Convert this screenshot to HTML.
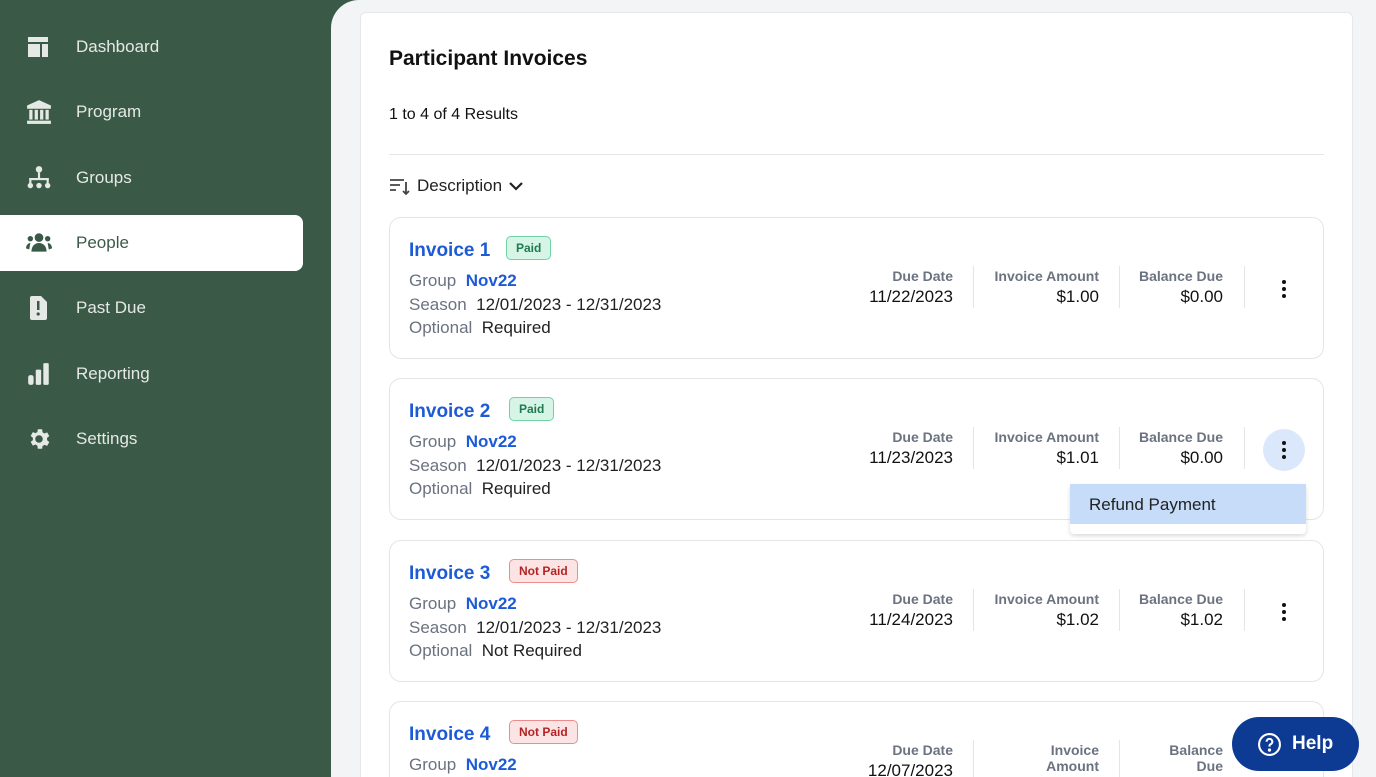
<!DOCTYPE html><html style="overflow:hidden;width:1376px;height:777px"><head><style>
*{box-sizing:border-box;margin:0;padding:0}
body{width:1376px;height:777px;overflow:hidden;background:#3b5947;font-family:"Liberation Sans",sans-serif;position:relative}
.side a{position:absolute;left:0;width:303px;height:56px;display:flex;align-items:center;color:#e4e9e5;font-size:17px;text-decoration:none}
.side a svg{position:absolute;left:26px}
.side a span{position:absolute;left:76px}
.side a.act{background:#fff;border-radius:0 8px 8px 0;color:#3b5947}
.main{position:absolute;left:331px;top:0;width:1045px;height:777px;background:#f3f4f6;border-top-left-radius:28px;overflow:hidden}
.panel{position:absolute;left:29px;top:12px;width:993px;height:765px;background:#fff;border:1px solid #e5e7eb;border-bottom:none;border-radius:6px 6px 0 0;overflow:hidden}
h1{position:absolute;left:28px;top:34px;font-size:21px;color:#111;font-weight:bold}
.res{position:absolute;left:28px;top:93px;font-size:16px;color:#111}
.hr{position:absolute;left:28px;top:141px;width:935px;height:1px;background:#e5e7eb}
.sort{position:absolute;left:28px;top:163px;font-size:17px;color:#222;display:flex;align-items:center;gap:6px}
.card{position:absolute;left:28px;width:935px;height:142px;border:1px solid #e3e5e8;border-radius:12px;background:#fff}
.t{position:absolute;left:19px;top:22px;font-size:19px;font-weight:bold;color:#1d5bd6}
.badge{position:absolute;top:18px;font-size:12px;font-weight:bold;padding:4px 9px;border-radius:5px}
.paid{background:#d6f5e6;border:1px solid #6fd3a5;color:#1e7a4f}
.np{background:#fde4e4;border:1px solid #ec8c8c;color:#b42323}
.l{position:absolute;left:19px;font-size:17px;color:#6b7280}
.l b{color:#1d5bd6}.l i{font-style:normal;color:#222}
.col{position:absolute;text-align:right;top:50px}
.col .h{font-size:14px;font-weight:bold;color:#6b7280}
.col .v{font-size:17px;color:#111;margin-top:3px}
.dv{position:absolute;top:48px;width:1px;height:42px;background:#e3e5e8}
.keb{position:absolute;left:873px;top:50px;width:42px;height:42px;border-radius:50%;display:flex;align-items:center;justify-content:center}
</style></head><body>
<div class="side">
<a style="top:19px"><svg width="24" height="24" viewBox="0 0 24 24" fill="#e4e9e5"><rect x="2" y="2" width="20" height="5"/><rect x="2" y="9" width="12" height="13"/><rect x="16" y="9" width="6" height="13"/></svg><span>Dashboard</span></a>
<a style="top:84px"><svg width="26" height="26" viewBox="0 0 24 24" fill="#e4e9e5"><path d="M12 1L1 6v3h22V6z"/><rect x="3" y="10" width="3" height="9"/><rect x="8" y="10" width="3" height="9"/><rect x="13" y="10" width="3" height="9"/><rect x="18" y="10" width="3" height="9"/><rect x="1" y="20" width="22" height="3"/></svg><span>Program</span></a>
<a style="top:150px"><svg width="26" height="26" viewBox="0 0 24 24" fill="#e4e9e5"><circle cx="12" cy="4" r="3"/><rect x="11" y="7" width="2" height="6"/><rect x="3" y="12" width="18" height="2"/><rect x="3" y="12" width="2" height="5"/><rect x="19" y="12" width="2" height="5"/><circle cx="4" cy="19" r="2.5"/><circle cx="12" cy="19" r="2.5"/><circle cx="20" cy="19" r="2.5"/></svg><span>Groups</span></a>
<a class="act" style="top:215px"><svg width="26" height="26" viewBox="0 0 24 24" fill="#3b5947"><circle cx="12" cy="7" r="4"/><circle cx="4" cy="8" r="2.5"/><circle cx="20" cy="8" r="2.5"/><path d="M5 20c0-5 3-8 7-8s7 3 7 8z"/><path d="M0 17c0-3 2-5 4-5l-1 6z"/><path d="M24 17c0-3-2-5-4-5l1 6z"/></svg><span>People</span></a>
<a style="top:280px"><svg width="24" height="26" viewBox="0 0 24 26" fill="#e4e9e5"><path d="M6 1h9l6 6v16a2 2 0 0 1-2 2H6a2 2 0 0 1-2-2V3a2 2 0 0 1 2-2z"/><rect x="11" y="6" width="2.5" height="9" fill="#3b5947"/><circle cx="12.2" cy="19" r="1.6" fill="#3b5947"/></svg><span>Past Due</span></a>
<a style="top:346px"><svg width="26" height="26" viewBox="0 0 24 24" fill="#e4e9e5"><rect x="2" y="13" width="5" height="9" rx="2"/><rect x="9" y="8" width="5" height="14" rx="1"/><rect x="16" y="2" width="5" height="20" rx="1"/></svg><span>Reporting</span></a>
<a style="top:411px"><svg width="26" height="26" viewBox="0 0 24 24" fill="#e4e9e5"><path d="M19.4 13a7.5 7.5 0 0 0 0-2l2.1-1.6-2-3.5-2.5 1a7.6 7.6 0 0 0-1.7-1L14.9 3h-4l-.4 2.6a7.6 7.6 0 0 0-1.7 1l-2.5-1-2 3.5L6.4 11a7.5 7.5 0 0 0 0 2l-2.1 1.6 2 3.5 2.5-1a7.6 7.6 0 0 0 1.7 1l.4 2.9h4l.4-2.6a7.6 7.6 0 0 0 1.7-1l2.5 1 2-3.5zM12 15.5A3.5 3.5 0 1 1 12 8.5a3.5 3.5 0 0 1 0 7z"/></svg><span>Settings</span></a>
</div>
<div class="main"><div class="panel">
<h1>Participant Invoices</h1>
<div class="res">1 to 4 of 4 Results</div>
<div class="hr"></div>
<div class="sort"><svg width="22" height="20" viewBox="0 0 22 20" stroke="#444" stroke-width="1.8" fill="none"><path d="M1 4h14M1 9h10M1 14h6M17 6v12M14 15l3 3 3-3"/></svg>Description <svg width="16" height="12" viewBox="0 0 16 12" stroke="#222" stroke-width="2.2" fill="none"><path d="M2 3l6 6 6-6"/></svg></div>

<div class="card" style="top:204px"><div class="t">Invoice 1</div><div class="badge paid" style="left:116px">Paid</div>
<div class="l" style="top:53px">Group&nbsp; <b>Nov22</b></div><div class="l" style="top:77px">Season&nbsp; <i>12/01/2023 - 12/31/2023</i></div><div class="l" style="top:100px">Optional&nbsp; <i>Required</i></div>
<div class="col" style="right:370px"><div class="h">Due Date</div><div class="v">11/22/2023</div></div><div class="dv" style="left:583px"></div>
<div class="col" style="right:224px"><div class="h">Invoice Amount</div><div class="v">$1.00</div></div><div class="dv" style="left:729px"></div>
<div class="col" style="right:100px"><div class="h">Balance Due</div><div class="v">$0.00</div></div><div class="dv" style="left:854px"></div>
<div class="keb"><svg width="6" height="20"><circle cx="3" cy="3" r="2" fill="#111"/><circle cx="3" cy="10" r="2" fill="#111"/><circle cx="3" cy="17" r="2" fill="#111"/></svg></div></div>

<div class="card" style="top:365px"><div class="t">Invoice 2</div><div class="badge paid" style="left:119px">Paid</div>
<div class="l" style="top:53px">Group&nbsp; <b>Nov22</b></div><div class="l" style="top:77px">Season&nbsp; <i>12/01/2023 - 12/31/2023</i></div><div class="l" style="top:100px">Optional&nbsp; <i>Required</i></div>
<div class="col" style="right:370px"><div class="h">Due Date</div><div class="v">11/23/2023</div></div><div class="dv" style="left:583px"></div>
<div class="col" style="right:224px"><div class="h">Invoice Amount</div><div class="v">$1.01</div></div><div class="dv" style="left:729px"></div>
<div class="col" style="right:100px"><div class="h">Balance Due</div><div class="v">$0.00</div></div><div class="dv" style="left:854px"></div>
<div class="keb" style="background:#dbe8fb"><svg width="6" height="20"><circle cx="3" cy="3" r="2" fill="#111"/><circle cx="3" cy="10" r="2" fill="#111"/><circle cx="3" cy="17" r="2" fill="#111"/></svg></div></div>

<div class="card" style="top:527px"><div class="t">Invoice 3</div><div class="badge np" style="left:119px">Not Paid</div>
<div class="l" style="top:53px">Group&nbsp; <b>Nov22</b></div><div class="l" style="top:77px">Season&nbsp; <i>12/01/2023 - 12/31/2023</i></div><div class="l" style="top:100px">Optional&nbsp; <i>Not Required</i></div>
<div class="col" style="right:370px"><div class="h">Due Date</div><div class="v">11/24/2023</div></div><div class="dv" style="left:583px"></div>
<div class="col" style="right:224px"><div class="h">Invoice Amount</div><div class="v">$1.02</div></div><div class="dv" style="left:729px"></div>
<div class="col" style="right:100px"><div class="h">Balance Due</div><div class="v">$1.02</div></div><div class="dv" style="left:854px"></div>
<div class="keb"><svg width="6" height="20"><circle cx="3" cy="3" r="2" fill="#111"/><circle cx="3" cy="10" r="2" fill="#111"/><circle cx="3" cy="17" r="2" fill="#111"/></svg></div></div>

<div class="card" style="top:688px;height:77px;border-bottom:none;border-radius:12px 12px 0 0;overflow:hidden"><div class="t">Invoice 4</div><div class="badge np" style="left:119px">Not Paid</div>
<div class="l" style="top:53px">Group&nbsp; <b>Nov22</b></div>
<div class="col" style="right:370px;top:40px"><div class="h">Due Date</div><div class="v">12/07/2023</div></div><div class="dv" style="left:583px;top:38px"></div>
<div class="col" style="right:224px;top:40px"><div class="h">Invoice<br>Amount</div></div><div class="dv" style="left:729px;top:38px"></div>
<div class="col" style="right:100px;top:40px"><div class="h">Balance<br>Due</div></div></div>

<div style="position:absolute;left:709px;top:471px;width:236px;height:50px;background:#fff;box-shadow:0 2px 4px rgba(0,0,0,.15);border-radius:4px"><div style="height:40px;background:#c6dcf8;padding:11px 19px;font-size:17px;color:#222">Refund Payment</div></div>
</div>
</div>
<div style="position:absolute;left:1232px;top:717px;width:127px;height:54px;background:#0d3a93;border-radius:27px;color:#fff;font-weight:bold;font-size:19px;display:flex;align-items:center;padding-left:25px;gap:10px"><svg width="25" height="25" viewBox="0 0 24 24" fill="none" stroke="#fff" stroke-width="2"><circle cx="12" cy="12" r="10"/><path d="M9.3 9.3a2.7 2.7 0 1 1 3.7 2.5c-.7.3-1 .9-1 1.6v.6"/><circle cx="12" cy="17.3" r=".6" fill="#fff"/></svg>Help</div>
</body></html>
